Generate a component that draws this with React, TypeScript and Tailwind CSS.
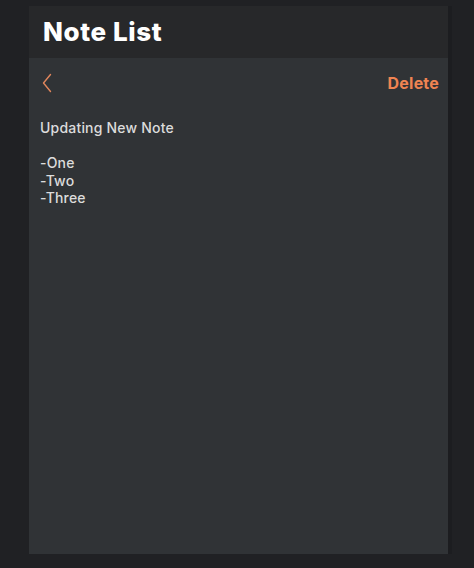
import React from "react";

const note = `Updating New Note

-One
-Two
-Three`;

const BackIcon = () => (
  <svg width="10" height="20" viewBox="0 0 10 20" fill="none">
    <path d="M8.5 1.5 L1.5 10 L8.5 18.5" stroke="#e0865c" strokeWidth="1.4" strokeLinecap="round" strokeLinejoin="round" />
  </svg>
);

export default function App() {
  return (
    <div className="min-h-[568px] w-full bg-[#202124] pt-[6px] pl-[29px] pr-[26px] pb-[14px] font-['Inter',sans-serif]">
      <div className="flex h-[548px] w-[419px] flex-col bg-[#303336] shadow-[4px_0_0_#1c1d20]">
        {/* шапка */}
        <div className="flex h-[52px] items-center bg-[#27282a] pl-[14px]">
          <h1 className="text-[26px] font-extrabold leading-none tracking-[0.6px] text-white">Note List</h1>
        </div>

        <div className="flex items-center justify-between pl-[13px] pr-[9px] pt-[13px]">
          <button className="flex h-[22px] items-center">
            <BackIcon />
          </button>
          <button className="text-[16px] font-bold tracking-[0.2px] text-[#ef8452]">Delete</button>
        </div>

        <p className="mt-[24px] whitespace-pre-wrap pl-[11px] text-[14px] font-medium leading-[17.5px] tracking-[0.2px] text-[#dcdcdc]">{note}</p>
      </div>
    </div>
  );
}
